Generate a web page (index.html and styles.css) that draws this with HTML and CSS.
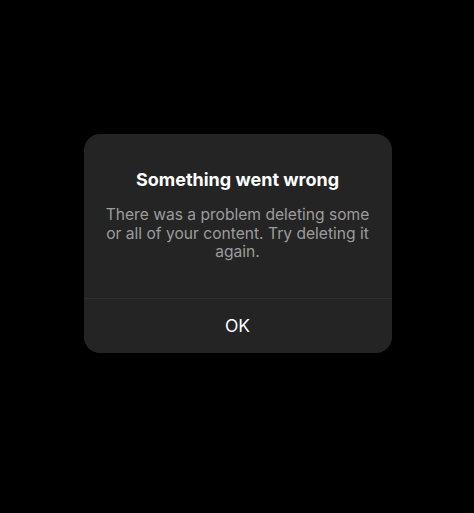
FILE: index.html
```html
<!DOCTYPE html>
<html>
<head>
<meta charset="utf-8">
<link rel="stylesheet" href="styles.css">
</head>
<body>
<div class="screen">
  <div class="dialog">
    <div class="content">
      <div class="title">Something went wrong</div>
      <div class="message">There was a problem deleting some or all of your content. Try deleting it again.</div>
    </div>
    <div class="divider"></div>
    <div class="button">OK</div>
  </div>
</div>
</body>
</html>
```
FILE: styles.css
```css
html, body {
  margin: 0;
  padding: 0;
  background: #000;
}
.screen {
  width: 474px;
  height: 513px;
  display: flex;
  justify-content: center;
  align-items: flex-start;
  font-family: Inter, "Noto Sans", sans-serif;
}
.dialog {
  margin-top: 134px;
  margin-left: 1px;
  width: 308px;
  height: 219px;
  background: #242424;
  border-radius: 16px;
  display: flex;
  flex-direction: column;
}
.content {
  height: 164px;
  box-sizing: border-box;
  padding: 35px 16px 0;
  text-align: center;
}
.title {
  color: #fff;
  font-size: 18px;
  font-weight: 700;
  line-height: 22px;
}
.message {
  margin-top: 15px;
  color: #9c9c9c;
  font-size: 15.6px;
  line-height: 18.5px;
}
.divider {
  height: 1px;
  background: #303030;
}
.button {
  flex: 1;
  display: flex;
  align-items: center;
  justify-content: center;
  color: #fff;
  font-size: 17.5px;
  padding-bottom: 1px;
}
```
